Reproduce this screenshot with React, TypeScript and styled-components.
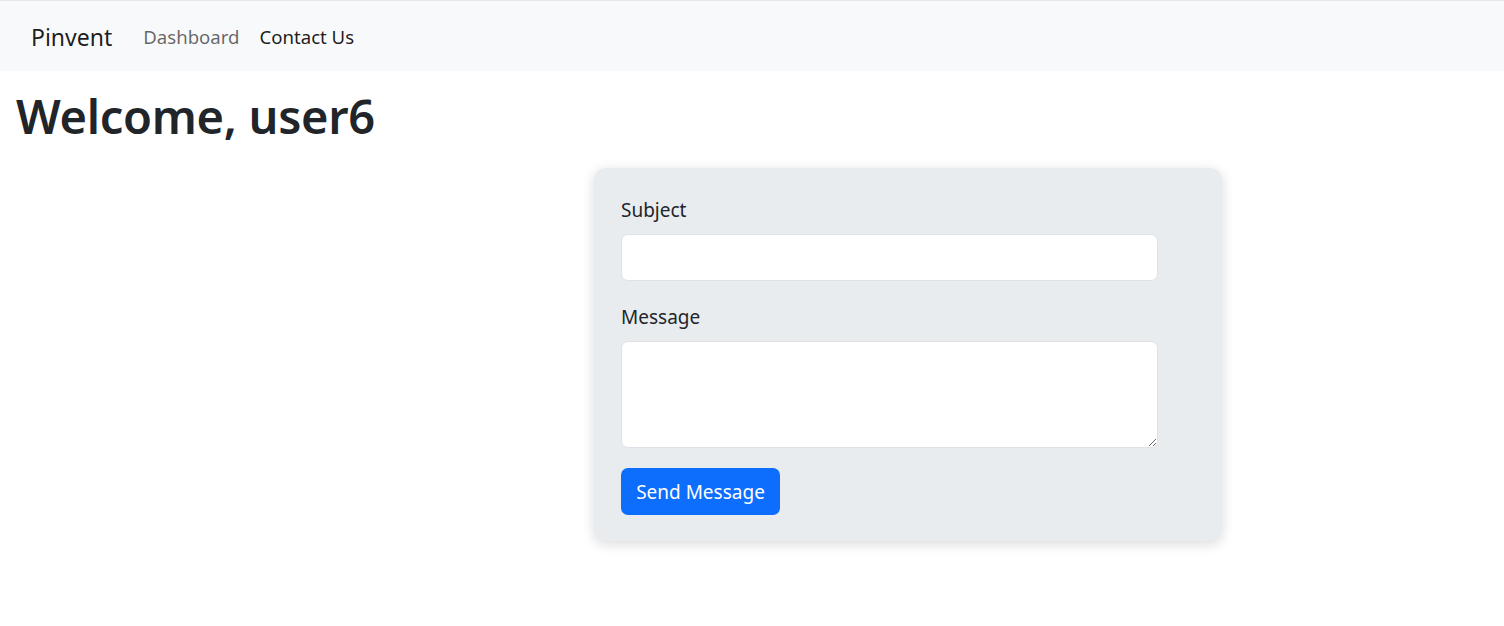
import React from "react";
import styled, { createGlobalStyle } from "styled-components";

const Global = createGlobalStyle`
  html, body { margin: 0; padding: 0; background: #fff; }
  body {
    font-family: "Noto Sans", "Open Sans", sans-serif;
    font-size: 20px;
    line-height: 1.5;
    color: #212529;
  }
  * { box-sizing: border-box; }
`;

const TopLine = styled.div`
  height: 1px;
  background: #e3e6ea;
`;

const Navbar = styled.nav`
  display: flex;
  align-items: center;
  height: 70px;
  background: #f8f9fa;
  padding: 2px 31px 0;
`;

const Brand = styled.a`
  font-size: 23px;
  color: rgba(0, 0, 0, 0.9);
  text-decoration: none;
  margin-right: 21px;
  line-height: 1.5;
`;

const NavLink = styled.a<{ $active?: boolean }>`
  font-size: 18.6px;
  padding: 0 10px;
  color: ${(p) => (p.$active ? "rgba(0,0,0,0.9)" : "rgba(0,0,0,0.6)")};
  text-decoration: none;
`;

const Main = styled.main`
  padding: 0 16px 60px;
`;

const Title = styled.h1`
  font-size: 47px;
  font-weight: 600;
  line-height: 1.2;
  margin: 17px 0 24px;
  color: #212529;
  letter-spacing: -0.3px;
`;

const Row = styled.div`
  display: flex;
  justify-content: center;
  padding-left: 312px;
`;

const Card = styled.div`
  width: 628px;
  background: #e9ecef;
  border-radius: 12px;
  box-shadow: 0 3px 12px 1px rgba(0, 0, 0, 0.13);
  padding: 27px 27px 26px;
`;

const Form = styled.form`
  width: 537px;
  display: flex;
  flex-direction: column;
`;

const Field = styled.div<{ $gap?: number }>`
  display: flex;
  flex-direction: column;
  margin-bottom: ${(p) => p.$gap ?? 21}px;
`;

const Label = styled.label`
  font-size: 19px;
  line-height: 30px;
  margin-bottom: 9px;
  color: #212529;
`;

const Input = styled.input`
  height: 47px;
  border: 1px solid #dee2e6;
  border-radius: 7px;
  background: #fff;
  font: inherit;
  padding: 0 15px;
  outline: none;
`;

const TextArea = styled.textarea`
  height: 107px;
  border: 1px solid #dee2e6;
  border-radius: 7px;
  background: #fff;
  font: inherit;
  padding: 8px 15px;
  outline: none;
  resize: vertical;
`;

const Button = styled.button`
  align-self: flex-start;
  height: 47px;
  width: 159px;
  border: none;
  border-radius: 7px;
  background: #0d6efd;
  color: #fff;
  font-family: inherit;
  font-size: 19px;
  padding: 0;
  cursor: pointer;
`;

export default function App() {
  return (
    <>
      <Global />
      <TopLine />
      <Navbar>
        <Brand href="#">Pinvent</Brand>
        <NavLink href="#">Dashboard</NavLink>
        <NavLink href="#" $active>
          Contact Us
        </NavLink>
      </Navbar>
      <Main>
        <Title>Welcome, user6</Title>
        <Row>
          <Card>
            <Form onSubmit={(e) => e.preventDefault()}>
              <Field>
                <Label>Subject</Label>
                <Input type="text" />
              </Field>
              <Field $gap={20}>
                <Label>Message</Label>
                <TextArea />
              </Field>
              <Button type="submit">Send Message</Button>
            </Form>
          </Card>
        </Row>
      </Main>
    </>
  );
}
